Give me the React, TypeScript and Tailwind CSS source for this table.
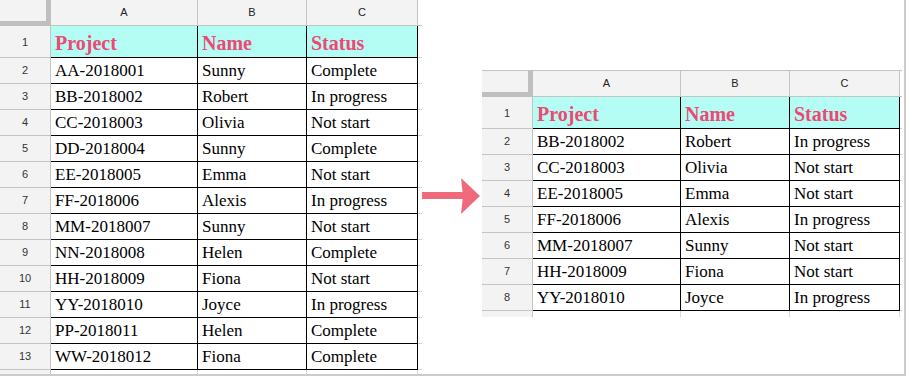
import React from "react";

type Row = [string, string, string];

const leftRows: Row[] = [
  ["AA-2018001", "Sunny", "Complete"],
  ["BB-2018002", "Robert", "In progress"],
  ["CC-2018003", "Olivia", "Not start"],
  ["DD-2018004", "Sunny", "Complete"],
  ["EE-2018005", "Emma", "Not start"],
  ["FF-2018006", "Alexis", "In progress"],
  ["MM-2018007", "Sunny", "Not start"],
  ["NN-2018008", "Helen", "Complete"],
  ["HH-2018009", "Fiona", "Not start"],
  ["YY-2018010", "Joyce", "In progress"],
  ["PP-2018011", "Helen", "Complete"],
  ["WW-2018012", "Fiona", "Complete"],
];

const rightRows: Row[] = [
  ["BB-2018002", "Robert", "In progress"],
  ["CC-2018003", "Olivia", "Not start"],
  ["EE-2018005", "Emma", "Not start"],
  ["FF-2018006", "Alexis", "In progress"],
  ["MM-2018007", "Sunny", "Not start"],
  ["HH-2018009", "Fiona", "Not start"],
  ["YY-2018010", "Joyce", "In progress"],
];

interface SheetProps {
  cols: [string, string, string];
  rows: Row[];
  top?: boolean;
  stub: string;
  tail: string;
}

const sans = "font-['Liberation_Sans',Arial,sans-serif]";
const serif = "font-['Liberation_Serif','Times_New_Roman',serif]";

function RowHead({ n, tall }: { n: number; tall?: boolean }) {
  return (
    <div
      className={`w-[51px] shrink-0 bg-[#f3f3f3] border-r border-b border-[#c4c4c4] flex items-center justify-center text-[11px] text-[#333] ${sans} ${tall ? "pt-[2px]" : ""}`}
    >
      {n}
    </div>
  );
}

function Sheet({ cols, rows, top, stub, tail }: SheetProps) {
  return (
    <div className="flex flex-col shrink-0">
      {/* column letters */}
      <div className={`flex h-[26px] ${top ? "h-[27px] border-t border-[#c4c4c4]" : ""}`}>
        <div className="w-[51px] shrink-0 bg-[#f3f3f3] border-r-[5px] border-b-[5px] border-[#bfbfbf]" />
        {["A", "B", "C"].map((l, i) => (
          <div
            key={l}
            className={`${cols[i]} shrink-0 bg-[#f3f3f3] border-r border-b border-[#c4c4c4] flex items-center justify-center text-[11px] text-[#222] ${sans}`}
          >
            {l}
          </div>
        ))}
        <div className={`${stub} shrink-0 border-b border-[#c4c4c4]`} />
      </div>

      {/* title row */}
      <div className="flex h-[32px]">
        <RowHead n={1} tall />
        {["Project", "Name", "Status"].map((t, i) => (
          <div
            key={t}
            className={`${cols[i]} shrink-0 bg-[#b4fdf4] border-r border-b border-black flex items-center pl-[4px] pt-[3px] text-[20px] font-bold text-[#ee4873] ${serif}`}
          >
            {t}
          </div>
        ))}
        <div className={`${stub} shrink-0 border-b border-[#d4d4d4]`} />
      </div>

      {rows.map((r, ri) => (
        <div key={ri} className="flex h-[26px]">
          <RowHead n={ri + 2} />
          {r.map((t, i) => (
            <div
              key={i}
              className={`${cols[i]} shrink-0 border-r border-b border-black flex items-center pl-[4px] text-[17px] text-black ${serif}`}
            >
              {t}
            </div>
          ))}
          <div className={`${stub} shrink-0 border-b border-[#d4d4d4]`} />
        </div>
      ))}

      {/* grid continues below */}
      <div className={`flex ${tail}`}>
        <div className="w-[51px] shrink-0 bg-[#f3f3f3] border-r border-[#c4c4c4]" />
        {cols.map((c, i) => (
          <div key={i} className={`${c} shrink-0 border-r border-[#d9d9d9]`} />
        ))}
      </div>
    </div>
  );
}

function Arrow() {
  return (
    <svg width="60" height="36" viewBox="0 0 60 36" className="block">
      <rect x="0" y="14" width="42" height="7" fill="#ef6b7b" />
      <polygon points="39,0 58,18 39,36 41,18" fill="#ef6b7b" />
    </svg>
  );
}

export default function App() {
  return (
    <div className="w-[906px] h-[376px] bg-white border-r-2 border-b-2 border-[#cccccc] flex items-start overflow-hidden">
      <Sheet
        cols={["w-[147px]", "w-[109px]", "w-[111px]"]}
        rows={leftRows}
        stub="w-[4px]"
        tail="h-[4px]"
      />
      <div className="w-[60px] shrink-0 mt-[178px]">
        <Arrow />
      </div>
      <div className="mt-[70px]">
        <Sheet
          cols={["w-[148px]", "w-[109px]", "w-[110px]"]}
          rows={rightRows}
          top
          stub="w-[2px]"
          tail="h-[6px]"
        />
      </div>
    </div>
  );
}
